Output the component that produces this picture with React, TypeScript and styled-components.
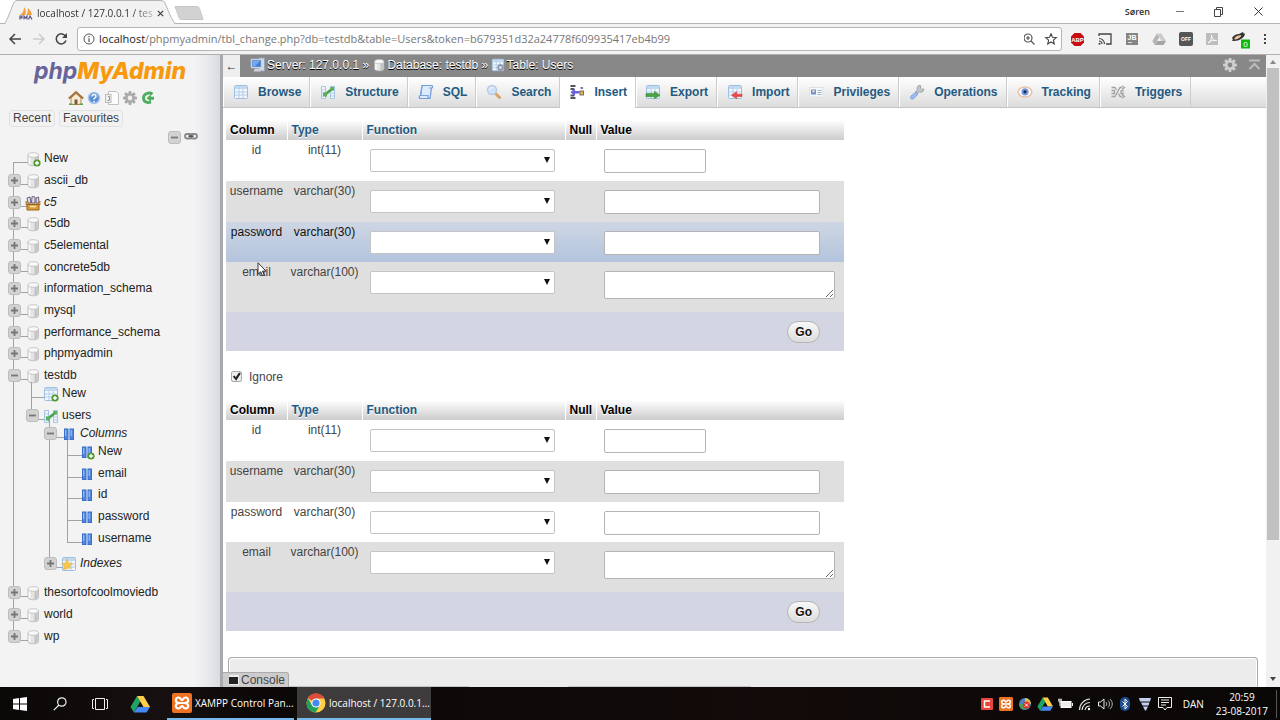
import React from "react";
import styled, { createGlobalStyle, css } from "styled-components";

const ui = `"Liberation Sans", Arial, sans-serif`;
const system = `"Open Sans", "Noto Sans", sans-serif`;

const GlobalStyle = createGlobalStyle`
  *, *::before, *::after { box-sizing: border-box; }
  body { margin: 0; font-family: ${ui}; font-size: 12px; color: #444; background: #fff; }
  button, input, select, textarea { font: inherit; color: inherit; margin: 0; }
  a { color: inherit; text-decoration: none; }
  ul { list-style: none; margin: 0; padding: 0; }
  svg { display: block; flex: none; }
`;

/* ---------- window frame ---------- */

const Shell = styled.div`
  display: flex;
  flex-direction: column;
  height: 100vh;
  overflow: hidden;
`;

const TabStrip = styled.header`
  display: flex;
  align-items: flex-end;
  height: 24px;
  flex: none;
  padding-left: 4px;
  background: #fff;
  border-bottom: 1px solid #b4b4b4;
`;

const BrowserTab = styled.div`
  position: relative;
  display: flex;
  align-items: center;
  gap: 4px;
  width: 172px;
  height: 24px;
  margin-bottom: -1px;
  padding: 2px 15px 0 15px;
  font: 10px/16px ${system};
  color: #333;
`;

const TabShape = styled.svg`
  position: absolute;
  inset: 0;
  width: 100%;
  height: 100%;
`;

const TabLabel = styled.span`
  position: relative;
  flex: 1;
  white-space: nowrap;
  mask-image: linear-gradient(to right, #000 80%, rgba(0, 0, 0, 0.3));
`;

const PlainButton = styled.button`
  position: relative;
  display: flex;
  align-items: center;
  justify-content: center;
  padding: 0;
  border: 0;
  background: none;
`;

const NewTab = styled(PlainButton)`
  align-self: flex-start;
  margin-top: 6px;
  margin-left: -2px;
`;

const WindowControls = styled.div`
  display: flex;
  align-items: center;
  align-self: stretch;
  gap: 30px;
  margin-left: auto;
  padding-right: 17px;
  color: #333;
`;

const Profile = styled.span`
  margin-right: -4px;
  font: 600 9px/14px ${system};
`;

const Toolbar = styled.div`
  display: flex;
  align-items: center;
  height: 31px;
  flex: none;
  padding: 0 13px 0 7px;
  background: #f2f2f2;
  border-bottom: 1px solid #b0b0b0;
`;

const NavButtons = styled.div`
  display: flex;
  gap: 7px;
  width: 70px;
`;

const AddressBar = styled.div`
  display: flex;
  align-items: center;
  flex: 1;
  gap: 4px;
  height: 24px;
  padding: 0 1px 0 5px;
  background: #fff;
  border: 1px solid #b5b5b5;
  border-radius: 3px;
`;

const Address = styled.div`
  flex: 1;
  font: 11px/18px ${system};
  color: #777;
  white-space: nowrap;
  overflow: hidden;
  b { font-weight: 400; color: #222; }
`;

const Extensions = styled.div`
  display: flex;
  align-items: center;
  gap: 12px;
  padding-left: 8px;
`;

/* ---------- page ---------- */

const Page = styled.div`
  display: flex;
  flex: 1;
  min-height: 0;
`;

const Sidebar = styled.nav`
  width: 223px;
  flex: none;
  overflow: hidden;
  border-right: 3px solid #a9a9ab;
  background: linear-gradient(to left, #d9dbe0, #e6e7eb 10px, #f3f3f3 26px);
`;

const Logo = styled.a`
  display: block;
  padding-bottom: 2px;
  text-align: center;
  font: italic 700 23px/32px Inter, sans-serif;
  color: #67639b;
  b { font-weight: 800; color: #f8990d; }
`;

const IconRow = styled.div`
  display: flex;
  justify-content: center;
  gap: 2px;
  padding: 1px 0 4px 4px;
`;

const Shortcuts = styled.div`
  display: flex;
  gap: 4px;
  padding: 0 9px;
`;

const Shortcut = styled.button`
  height: 17px;
  padding: 0 3px;
  border: 1px solid #e2e2e2;
  border-radius: 3px;
  background: #f2f2f2;
  line-height: 15px;
`;

const TreeTools = styled.div`
  display: flex;
  justify-content: flex-end;
  align-items: center;
  gap: 2px;
  height: 20px;
  padding: 0 21px 2px 0;
`;

const Row = styled.li<{ $h: number }>`
  display: flex;
  align-items: flex-start;
  height: ${(p) => p.$h}px;
  padding-left: 6px;
  color: #222;
`;

const Guide = styled.span<{ $v?: "full" | "top" | "bottom"; $branch?: boolean }>`
  --line: linear-gradient(#a2a2a2, #a2a2a2);
  align-self: stretch;
  width: ${(p) => (p.$branch ? 22 : 18)}px;
  margin-right: ${(p) => (p.$branch ? -4 : 0)}px;
  flex: none;
  padding-top: 3px;
  background-image: ${(p) => (p.$v ? "var(--line)" : "none")}, ${(p) => (p.$branch ? "var(--line)" : "none")};
  background-repeat: no-repeat;
  background-size: 1px ${(p) => (p.$v === "top" ? "15px" : "100%")}, 15px 1px;
  background-position: 7px ${(p) => (p.$v === "bottom" ? "15px" : "0")}, 7px 15px;
`;

const Toggle = styled.button`
  display: flex;
  align-items: center;
  justify-content: center;
  width: 13px;
  height: 13px;
  margin: 2px 0 0 2px;
  padding: 0;
  border: 1px solid #bdbdbd;
  border-radius: 3px;
  background: #d2d2d2;
`;

const NodeIcon = styled(Guide)`
  padding: 4px 0 0 1px;
`;

const NodeLink = styled.a<{ $italic?: boolean }>`
  padding: 3px 0 0 2px;
  line-height: 16px;
  font-style: ${(p) => (p.$italic ? "italic" : "normal")};
`;

const Main = styled.main`
  position: relative;
  display: flex;
  flex: 1;
  flex-direction: column;
  min-width: 0;
  overflow: hidden;
  background: #fff;
`;

const Crumbs = styled.div`
  display: flex;
  align-items: center;
  height: 22px;
  flex: none;
  padding-bottom: 2px;
  background: #888;
  color: #fff;
  text-shadow: 0 1px 0 #000;
  white-space: pre;
  svg { margin-right: 1px; }
`;

const Collapse = styled.button`
  width: 17px;
  height: 22px;
  margin: 2px 10px 0 0;
  padding: 0;
  border: 0;
  background: #eee;
  color: #333;
  line-height: 20px;
`;

const CrumbTools = styled.div`
  display: flex;
  gap: 7px;
  margin-left: auto;
  padding-right: 3px;
`;

const Tabs = styled.ul`
  display: flex;
  height: 31px;
  flex: none;
  background: linear-gradient(#fff, #dcdcdc);
  border-bottom: 1px solid #c4c4c4;
`;

const TabLink = styled.a<{ $on?: boolean }>`
  display: flex;
  align-items: center;
  gap: 9px;
  height: ${(p) => (p.$on ? 31 : 30)}px;
  padding: 0 8px ${(p) => (p.$on ? 1 : 0)}px 10px;
  border-right: 1px solid #ccc;
  box-shadow: inset 1px 0 0 #fff;
  background: ${(p) => (p.$on ? "#fff" : "none")};
  color: #235a81;
  font-weight: 700;
  white-space: nowrap;
`;

const TabItem = styled.li`
  &:nth-child(5) a, &:nth-child(6) a { padding-left: 9px; }
`;

const Content = styled.form`
  padding: 12px 8px 0 3px;
`;

const DataTable = styled.table`
  width: 618px;
  table-layout: fixed;
  border-collapse: collapse;
`;

const Th = styled.th<{ $link?: boolean }>`
  height: 20px;
  padding: 0 4px;
  background: linear-gradient(#fff, #ccc);
  border-right: 1px solid #fff;
  color: ${(p) => (p.$link ? "#235a81" : "#000")};
  line-height: 18px;
  text-align: left;
  text-shadow: 0 1px 0 #fff;
  &:last-child { border-right: 0; }
`;

type Tone = "plain" | "shade" | "hover";
const tones: Record<Tone, string> = {
  plain: "#fff",
  shade: "#dfdfdf",
  hover: "linear-gradient(#ced6e4, #b3c4dc)",
};

const FieldRow = styled.tr<{ $tone: Tone; $h: number }>`
  height: ${(p) => p.$h}px;
  background: ${(p) => tones[p.$tone]};
  color: ${(p) => (p.$tone === "hover" ? "#111" : "#444")};
`;

const Td = styled.td<{ $text?: boolean }>`
  position: relative;
  padding: ${(p) => (p.$text ? "3px 0 0" : "9px 0 0 8px")};
  text-align: ${(p) => (p.$text ? "center" : "left")};
  vertical-align: top;
  line-height: 15px;
`;

const SelectBox = styled.span`
  position: relative;
  display: block;
  width: 185px;
  &::after {
    content: "";
    position: absolute;
    top: 8px;
    right: 5px;
    width: 6px;
    height: 6px;
    background: #111;
    clip-path: polygon(0 0, 100% 0, 50% 100%);
  }
`;

const field = css`
  display: block;
  border: 1px solid #b4b4b4;
  border-radius: 2px;
  background: #fff;
  padding: 2px 5px;
`;

const Select = styled.select`
  ${field}
  appearance: none;
  width: 100%;
  height: 23px;
  border-color: #c4c4c4;
`;

const TextInput = styled.input<{ $w: number }>`
  ${field}
  width: ${(p) => p.$w}px;
  height: 24px;
`;

const TextArea = styled.textarea`
  ${field}
  width: 231px;
  height: 28px;
`;

const FooterCell = styled.td`
  height: 39px;
  padding: 0 24px 0 0;
  background: #d3d6e2;
`;

const GoButton = styled.button`
  display: block;
  height: 22px;
  margin-left: auto;
  padding: 0 7px;
  border: 1px solid #b4b4b4;
  border-radius: 12px;
  background: linear-gradient(#f8f8f8, #dcdcdc);
  color: #111;
  font-weight: 700;
  text-shadow: 0 1px 0 #fff;
`;

const IgnoreRow = styled.label`
  display: flex;
  align-items: center;
  gap: 7px;
  height: 49px;
  padding: 2px 0 0 5px;
`;

const Checkbox = styled.input`
  appearance: none;
  width: 11px;
  height: 11px;
  border: 1px solid #aaa;
  border-radius: 2px;
  background: #eee;
  &:checked::before {
    content: "";
    display: block;
    width: 9px;
    height: 9px;
    background: #222;
    clip-path: polygon(10% 50%, 28% 38%, 42% 58%, 78% 5%, 98% 16%, 46% 96%);
  }
`;

const Options = styled.fieldset`
  display: flex;
  gap: 97px;
  margin: 26px 0 0 2px;
  padding: 28px 56px;
  border: 1px solid #aaa;
  border-bottom: 0;
  border-radius: 4px 4px 0 0;
  background: #ececec;
  box-shadow: inset 0 0 0 1px #fff;
`;

const ConsoleButton = styled.button`
  position: absolute;
  left: 0;
  bottom: 0;
  display: flex;
  align-items: center;
  gap: 2px;
  height: 15px;
  padding: 0 3px 0 6px;
  border: 1px solid #aaa;
  border-width: 1px 1px 0 0;
  border-radius: 0 3px 0 0;
  background: #ccc;
`;

const ScrollTrack = styled.div`
  display: flex;
  flex-direction: column;
  align-items: center;
  width: 14px;
  flex: none;
  padding: 5px 0 6px;
  background: #f1f1f1;
`;

const ScrollRail = styled.div`
  flex: 1;
  width: 12px;
  margin: 4px 0;
`;

const ScrollThumb = styled.div`
  height: 78%;
  background: #c1c1c1;
`;

const Cursor = styled.svg`
  position: absolute;
  left: 31px;
  top: 0;
`;

/* ---------- taskbar ---------- */

const Taskbar = styled.footer`
  display: flex;
  align-items: center;
  height: 33px;
  flex: none;
  padding: 0 3px 0 0;
  background: linear-gradient(to right, #0a0707, #171010 13%, #0c0808 20%, #120b0a 60%, #0a0707);
  color: #fff;
  font: 10px/14px ${system};
`;

const Launcher = styled(PlainButton)`
  width: 40px;
  height: 33px;
`;

const TaskButtons = styled.div`
  display: flex;
  gap: 3px;
  padding-left: 7px;
`;

const TaskButton = styled.button<{ $on?: boolean }>`
  display: flex;
  align-items: center;
  gap: 3px;
  flex: none;
  width: ${(p) => (p.$on ? 134 : 127)}px;
  height: 33px;
  padding: 0 0 0 ${(p) => (p.$on ? 9 : 5)}px;
  border: 0;
  border-bottom: 2px solid #76b9ed;
  background: ${(p) => (p.$on ? "#3e3b3c" : "none")};
  color: #fff;
  white-space: nowrap;
`;

const Tray = styled.div`
  display: flex;
  align-items: center;
  gap: 4px;
  margin-left: auto;
`;

const TrayLanguage = styled.span`
  padding-left: 6px;
`;

const Clock = styled.time`
  padding: 0 8px;
  border-right: 1px solid #555;
  text-align: center;
`;

/* ---------- icons ---------- */

const Plus = ({ minus }: { minus?: boolean }) => (
  <svg width="7" height="7" viewBox="0 0 7 7">
    <path d={minus ? "M0 3.500h7" : "M0 3.500h7M3.500 0v7"} stroke="#777" strokeWidth="1.800" />
  </svg>
);

const Added = () => (
  <g>
    <circle cx="12" cy="12" r="3.6" fill="#4f9a2e" />
    <path d="M12 10v4M10 12h4" stroke="#fff" strokeWidth="1.4" />
  </g>
);

type IconName =
  | "db" | "dbNew" | "group" | "tableNew" | "table" | "structure" | "columns" | "columnsNew" | "indexes"
  | "sql" | "search" | "insert" | "export" | "import" | "privileges" | "wrench" | "eye" | "triggers"
  | "server" | "tableGear" | "home" | "help" | "doc" | "gear" | "reload" | "link";

const Grid = () => (
  <g>
    <rect x="1.500" y="1.500" width="13" height="13" rx="1" fill="#f2f8fd" stroke="#9dbfe0" />
    <path d="M2 2h12v3H2z" fill="#c2d9f0" />
    <path d="M2 8h12M2 11h12M6 3v11M10 5v9" stroke="#b4cde6" />
  </g>
);

const Gear = ({ fill, hole = "#eee" }: { fill: string; hole?: string }) => (
  <g>
    {[0, 45, 90, 135].map((a) => (
      <rect key={a} x="6.500" y="1" width="3" height="14" rx="1" fill={fill} transform={`rotate(${a} 8 8)`} />
    ))}
    <circle cx="8" cy="8" r="4.800" fill={fill} />
    <circle cx="8" cy="8" r="2.400" fill={hole} />
  </g>
);

const Cylinder = () => (
  <g>
    <path d="M3 4v8.500c0 3 10.500 3 10.500 0V4z" fill="#e4e4e4" stroke="#b5b5b5" strokeWidth=".8" />
    <path d="M9.500 6.500v8c2-.2 3.200-1 3.200-2V5z" fill="#c4c4c4" />
    <path d="M4.500 6v7" stroke="#fff" strokeWidth="1.500" />
    <ellipse cx="8.250" cy="4" rx="5.250" ry="2.300" fill="#f8f8f8" stroke="#bdbdbd" strokeWidth=".8" />
  </g>
);

const Bars = () => (
  <g>
    <rect x="3.500" y="3" width="3.500" height="10.500" fill="#4f86e0" stroke="#3a6fc9" />
    <rect x="9" y="3" width="3.500" height="10.500" fill="#4f86e0" stroke="#3a6fc9" />
    <path d="M4.700 4v6M10.200 4v6" stroke="#a9c8f8" />
  </g>
);

const glyphs: Record<IconName, React.ReactNode> = {
  db: <Cylinder />,
  dbNew: <><Cylinder /><Added /></>,
  group: (
    <g>
      <path d="M2 3l3-1 1 6H3zM7 1.500l3 .5v6H6.500zM11 3l2.500-1 .5 6h-3z" fill="#e3dcea" stroke="#54405e" strokeWidth=".8" />
      <path d="M1 6l2 3h10l2-3v4H1z" fill="#e2ae50" stroke="#a36b1d" strokeWidth=".7" />
      <path d="M2 9.500h12V15H2z" fill="#dc9b35" stroke="#99651c" />
      <path d="M5 11.500h6" stroke="#fbe7b3" strokeWidth="1.500" />
    </g>
  ),
  tableNew: <><Grid /><Added /></>,
  table: <Grid />,
  structure: (
    <g>
      <path d="M1.500 2.500h4v12h-4zM10.500 2.500h4v12h-4z" fill="#eef5fc" stroke="#a6c5e3" />
      <path d="M2 6h3M2 9h3M2 12h3M11 6h3M11 9h3M11 12h3" stroke="#b7d0e9" />
      <path d="M4.500 11L12 5" fill="none" stroke="#4aa04e" strokeWidth="2.600" />
      <path d="M3 8.500h4v4H3zM10.500 3H14v3.500h-3.500z" fill="#5bb05c" />
    </g>
  ),
  columns: <Bars />,
  columnsNew: <><Bars /><Added /></>,
  indexes: (
    <g>
      <Grid />
      <path d="M6 3L4.500 7 0.500 7.500 3.500 10l-1.500 4.500L6.500 12l3 .5-1-2.500 3-2.500-4-.5z" fill="#f7c64b" stroke="#e8b24a" strokeWidth=".6" />
    </g>
  ),
  sql: (
    <g>
      <path d="M4 1.500h9.500c1.500 0 1.500 2.500 0 2.500L12 14.500H2.500c-2 0-1.500-3 0-3z" fill="#dceafa" stroke="#6f9bd8" strokeWidth="1.200" />
      <path d="M4 1.500L2.800 11.500H10c-.5 1 .5 3 2 3M13.500 4H11" fill="none" stroke="#7ba6de" strokeWidth="1.200" />
    </g>
  ),
  search: (
    <g>
      <path d="M9.500 9.500L13.500 13.500" stroke="#d9a468" strokeWidth="3" strokeLinecap="round" />
      <circle cx="6" cy="6" r="4.500" fill="#cfe4fa" stroke="#b9c9dd" strokeWidth="1.400" />
      <path d="M3.500 5.500C4 4 5 3.500 6.500 3.500" stroke="#fff" fill="none" />
    </g>
  ),
  insert: (
    <g>
      <path d="M1.500 2h5M1.500 14h5M1.500 5h3.500M1.500 11.500h3.500" stroke="#555" strokeWidth="1.800" />
      <path d="M1.500 8.300l4.500-4v2.700H10.500v2.600H6v2.700z" fill="#6d63d8" />
      <path d="M11.500 3h2.500v2h-2.500z" fill="#77a" />
      <rect x="11" y="7" width="3.500" height="4" fill="#e7b73e" stroke="#666" strokeWidth=".9" />
    </g>
  ),
  export: (
    <g>
      <Grid />
      <path d="M1 9.500h8.500V7.500l5.500 3.700-5.500 3.500v-2H1z" fill="#4ba343" stroke="#3a8a3a" strokeWidth=".6" />
    </g>
  ),
  import: (
    <g>
      <Grid />
      <path d="M15 10.200H9.500V7.800L4.500 11.200 9.500 14.600v-2.200H15z" fill="#ea4a4a" stroke="#d23a3a" strokeWidth=".6" />
    </g>
  ),
  privileges: (
    <g>
      <rect x="1.500" y="3.500" width="13.500" height="9.500" fill="#f5f8fb" stroke="#dbe3ea" />
      <rect x="3" y="5.500" width="5" height="5" fill="#6d94c9" />
      <circle cx="5.500" cy="7.200" r="1.200" fill="#f2d2b5" />
      <path d="M9.500 6.500h4M9.500 8.500h4M9.500 10.500h4" stroke="#9db4cc" />
    </g>
  ),
  wrench: (
    <g>
      <path d="M10 1.500c2-.8 2 .8 1.300 2.500l1.200 1.200c1.200-.4 2.700-.5 2.300.8-.8 2.200-2.800 2.500-4.500 1.800L8 9.500 6.500 8l1.800-2.300C7.800 4 8.300 2.200 10 1.500z" fill="#c4c7cc" stroke="#95999f" strokeWidth=".9" />
      <path d="M7 8l2 2-4.300 4.600c-2 1.500-4-.6-2.800-2.500z" fill="#9dbcf2" stroke="#6f93d6" strokeWidth=".8" />
    </g>
  ),
  eye: (
    <g>
      <ellipse cx="8" cy="8" rx="6.800" ry="5" fill="#fff" stroke="#e8c2a5" strokeWidth="1.500" />
      <circle cx="8" cy="7.800" r="3.600" fill="#7397d8" />
      <circle cx="8" cy="7.800" r="1.600" fill="#1c2b52" />
    </g>
  ),
  triggers: (
    <g fill="none" stroke="#a2a2a2" strokeWidth="1.300">
      <path d="M1.500 3.500H5L6.500 6M1.500 12.500H5l5-9h2M8.500 9.500l1.500 3h2" />
      <path d="M12 2l2.500 1.500L12 5.500M12 10.500l2.500 2-2.500 1.500M1.500 6.500h3v3h-3M14 6.800h-3v2.700h3" />
    </g>
  ),
  server: (
    <g>
      <path d="M9 1h5.500v13H9z" fill="#d4dae2" stroke="#98a3b0" />
      <rect x="1.500" y="2.500" width="10" height="8" fill="#3f7bd0" stroke="#c5d3e6" strokeWidth="1.400" />
      <path d="M2.500 3.500h8L5 9.500H2.500z" fill="#77a8ea" />
      <path d="M5 11.500h4l1.500 3h-7z" fill="#cdd3da" />
    </g>
  ),
  tableGear: (
    <g>
      <Grid />
      <g transform="translate(6 6) scale(.6)"><Gear fill="#8c96a8" /></g>
    </g>
  ),
  home: (
    <g>
      <path d="M3 8v6.500h10V8L8 3.500z" fill="#f6ecd6" stroke="#b18a50" />
      <path d="M.8 8.500L8 2l7.200 6.500" fill="none" stroke="#a9713c" strokeWidth="2" />
      <path d="M6.500 9.500h3v5h-3z" fill="#7b5a3a" />
      <path d="M1 13.500h3.500V15H1zM11.500 13.500H15V15h-3.500z" fill="#5aa646" />
    </g>
  ),
  help: (
    <g>
      <circle cx="8" cy="8" r="5.500" fill="#5b8fd6" stroke="#a7c4ec" strokeWidth="1.500" />
      <path d="M6 6.500c0-2.800 4.200-2.500 4 0C9.900 7.800 8 7.800 8 9.500M8 11v1.500" fill="none" stroke="#fff" strokeWidth="1.500" />
    </g>
  ),
  doc: (
    <g>
      <path d="M4.500 1.500h8l2 2v11h-10z" fill="#fcfcfc" stroke="#c2c2c2" />
      <rect x="1.500" y="4.500" width="5.500" height="8" fill="#eee" stroke="#bbb" />
      <path d="M4 6.500h1.500v4H3.500" fill="none" stroke="#999" />
    </g>
  ),
  gear: <Gear fill="#a9a9a9" />,
  reload: (
    <g>
      <path d="M12.500 4.200C9 1.500 3.500 4 3.500 8c0 4 4 5.500 7.500 4" fill="none" stroke="#4dac5e" strokeWidth="2.800" />
      <path d="M6.500 8l4.500-3.500v2.200h3v3h-3V12z" fill="#4dac5e" />
    </g>
  ),
  link: (
    <g fill="none" stroke="#888" strokeWidth="1.800">
      <rect x="2" y="6" width="6.500" height="4.500" rx="2.200" />
      <rect x="7.500" y="6" width="6.500" height="4.500" rx="2.200" />
      <path d="M5.500 8.200h5" stroke="#555" />
    </g>
  ),
};

const Icon = ({ name, size = 16 }: { name: IconName; size?: number }) => (
  <svg width={size} height={size} viewBox="0 0 16 16" aria-hidden="true">{glyphs[name]}</svg>
);

const DriveIcon = ({ size }: { size: number }) => (
  <svg width={size} height={size} viewBox="0 0 20 20">
    <path d="M7 2L0.500 13 4 18.500 10.300 7.500z" fill="#1da462" />
    <path d="M7 2h6.500L20 13h-6.500z" fill="#ffcf48" />
    <path d="M7.500 13H20l-3.500 5.500H4z" fill="#4587f4" />
  </svg>
);

const XamppIcon = ({ size }: { size: number }) => (
  <svg width={size} height={size} viewBox="0 0 20 20">
    <rect width="20" height="20" rx="2" fill="#ee7224" />
    <path d="M7.500 10h5M7.500 10c-5 0-4.500-5.500-1-5.500C9 4.500 8.500 7 10 7s1-2.500 3.500-2.500c3.500 0 4 5.500-1 5.500 5 0 4.500 5.500 1 5.500C11 15.500 11.500 13 10 13s-1 2.500-3.500 2.500C3 15.500 2.500 10 7.500 10z" fill="none" stroke="#fff" strokeWidth="2.200" />
  </svg>
);

const ChromeIcon = ({ size }: { size: number }) => (
  <svg width={size} height={size} viewBox="0 0 20 20">
    <circle cx="10" cy="10" r="9.500" fill="#ffce44" />
    <path d="M10 10L1.800 5.200A9.500 9.500 0 0 1 18.300 5.500H10z" fill="#de4a3b" />
    <path d="M1.800 5.200A9.500 9.500 0 0 0 9.500 19.500L14 12.200 6 12.200z" fill="#1da15d" />
    <circle cx="10" cy="10" r="4.600" fill="#fff" />
    <circle cx="10" cy="10" r="3.600" fill="#4688f4" />
  </svg>
);

/* ---------- data ---------- */

type Vertical = "full" | "top" | "bottom";
interface Node {
  label: string;
  icon: IconName;
  h: number;
  guides?: (Vertical | undefined)[];
  toggle?: "+" | "-";
  v?: Vertical;
  below?: boolean;
  italic?: boolean;
}

const database = (label: string, h = 22): Node => ({ label, icon: "db", h, toggle: "+", v: "full" });

const tree: Node[] = [
  { label: "New", icon: "dbNew", h: 22, v: "bottom" },
  database("ascii_db"),
  { ...database("c5", 21), icon: "group", italic: true },
  database("c5db"),
  database("c5elemental"),
  database("concrete5db", 21),
  database("information_schema"),
  database("mysql"),
  database("performance_schema", 21),
  database("phpmyadmin"),
  { label: "testdb", icon: "db", h: 18, toggle: "-", v: "full", below: true },
  { label: "New", icon: "tableNew", h: 22, guides: ["full"], v: "full" },
  { label: "users", icon: "structure", h: 18, guides: ["full"], toggle: "-", v: "top", below: true },
  { label: "Columns", icon: "columns", h: 18, guides: ["full", undefined], toggle: "-", v: "full", below: true, italic: true },
  { label: "New", icon: "columnsNew", h: 22, guides: ["full", undefined, "full"], v: "full" },
  { label: "email", icon: "columns", h: 21, guides: ["full", undefined, "full"], v: "full" },
  { label: "id", icon: "columns", h: 22, guides: ["full", undefined, "full"], v: "full" },
  { label: "password", icon: "columns", h: 22, guides: ["full", undefined, "full"], v: "full" },
  { label: "username", icon: "columns", h: 25, guides: ["full", undefined, "full"], v: "top" },
  { label: "Indexes", icon: "indexes", h: 29, guides: ["full", undefined], toggle: "+", v: "top", italic: true },
  database("thesortofcoolmoviedb"),
  database("world"),
  { ...database("wp"), v: "top" },
];

const tabs: [string, IconName][] = [
  ["Browse", "table"], ["Structure", "structure"], ["SQL", "sql"], ["Search", "search"], ["Insert", "insert"],
  ["Export", "export"], ["Import", "import"], ["Privileges", "privileges"], ["Operations", "wrench"],
  ["Tracking", "eye"], ["Triggers", "triggers"],
];

const columns: { name: string; type: string; h: number; width: number; tone: Tone }[] = [
  { name: "id", type: "int(11)", h: 41, width: 102, tone: "plain" },
  { name: "username", type: "varchar(30)", h: 41, width: 216, tone: "shade" },
  { name: "password", type: "varchar(30)", h: 40, width: 216, tone: "plain" },
  { name: "email", type: "varchar(100)", h: 50, width: 0, tone: "shade" },
];

/* ---------- parts ---------- */

const TreeRow = ({ node }: { node: Node }) => (
  <Row $h={node.h}>
    {node.guides?.map((g, i) => <Guide key={i} $v={g} />)}
    <Guide $v={node.v} $branch>
      {node.toggle && (
        <Toggle type="button" aria-label={node.toggle === "+" ? "Expand" : "Collapse"}>
          <Plus minus={node.toggle === "-"} />
        </Toggle>
      )}
    </Guide>
    <NodeIcon $v={node.below ? "bottom" : undefined}><Icon name={node.icon} /></NodeIcon>
    <NodeLink href="#" $italic={node.italic}>{node.label}</NodeLink>
  </Row>
);

const InsertTable = ({ hovered }: { hovered?: string }) => (
  <DataTable>
    <colgroup>
      <col width="61" /><col width="75" /><col width="203" /><col width="31" /><col />
    </colgroup>
    <thead>
      <tr>
        <Th>Column</Th>
        <Th $link><a href="#">Type</a></Th>
        <Th $link><a href="#">Function</a></Th>
        <Th>Null</Th>
        <Th>Value</Th>
      </tr>
    </thead>
    <tbody>
      {columns.map((c) => (
        <FieldRow key={c.name} $h={c.h} $tone={hovered === c.name ? "hover" : c.tone}>
          <Td $text>
            {c.name}
            {hovered && c.name === "email" && (
              <Cursor width="11" height="16" viewBox="0 0 11 16">
                <path d="M1 .8v11.400l2.700-2.500 1.700 4 1.700-.8-1.600-3.800H9z" fill="#fff" stroke="#222" strokeWidth=".9" />
              </Cursor>
            )}
          </Td>
          <Td $text>{c.type}</Td>
          <Td>
            <SelectBox><Select aria-label={`Function for ${c.name}`}><option /></Select></SelectBox>
          </Td>
          <Td />
          <Td>
            {c.width ? <TextInput $w={c.width} aria-label={`Value of ${c.name}`} /> : <TextArea aria-label={`Value of ${c.name}`} />}
          </Td>
        </FieldRow>
      ))}
    </tbody>
    <tfoot>
      <tr><FooterCell colSpan={5}><GoButton type="button">Go</GoButton></FooterCell></tr>
    </tfoot>
  </DataTable>
);

const stroke = { fill: "none", stroke: "#444", strokeWidth: 1.5 };

export default function App() {
  return (
    <Shell>
      <GlobalStyle />
      <TabStrip>
        <BrowserTab>
          <TabShape viewBox="0 0 172 24" preserveAspectRatio="none">
            <path d="M0 24C3 22 8 6 10 2.500Q11 .5 13 .5H157Q160 .5 161 3C163 7 168 22 172 24z" fill="#f2f2f2" stroke="#b4b4b4" />
            <path d="M2 24h168" stroke="#f2f2f2" strokeWidth="2" />
          </TabShape>
          <PlainButton as="span">
            <svg width="14" height="14" viewBox="0 0 14 14">
              <path d="M1 9C4 7 5 4 5 1c2 2 2 5 1.500 8zM7.500 9C9 7 9 4 8.500 2c2 1 4 4 4.500 7z" fill="#f6a03c" />
              <path d="M1 13.500V10h2v1.800H1M5 13.500V10l1.500 2L8 10v3.500M9.500 13.500l1.500-3.500 2 3.500" fill="none" stroke="#5b5488" strokeWidth="1.200" />
            </svg>
          </PlainButton>
          <TabLabel>localhost / 127.0.0.1 / tes</TabLabel>
          <PlainButton aria-label="Close tab">
            <svg width="7" height="7" viewBox="0 0 8 8"><path d="M1 1l6 6M7 1L1 7" {...stroke} /></svg>
          </PlainButton>
        </BrowserTab>
        <NewTab aria-label="New tab">
          <svg width="30" height="14" viewBox="0 0 30 14"><path d="M1 .5h22c1 0 2 .5 2.500 2L29 13.500H7c-1 0-1.500-.5-2-2z" fill="#d2d2d2" stroke="#c6c6c6" /></svg>
        </NewTab>
        <WindowControls>
          <Profile>Søren</Profile>
          <PlainButton aria-label="Minimise"><svg width="8" height="8" viewBox="0 0 8 8"><path d="M0 3.500h8" stroke="#777" /></svg></PlainButton>
          <PlainButton aria-label="Restore"><svg width="10" height="10" viewBox="0 0 10 10"><path d="M.5 2.500h6v7h-6zM2.500 2.500v-2h6v7h-2" fill="none" stroke="#444" /></svg></PlainButton>
          <PlainButton aria-label="Close"><svg width="9" height="9" viewBox="0 0 9 9"><path d="M.5 .5l8 8M8.500 .5l-8 8" stroke="#333" /></svg></PlainButton>
        </WindowControls>
      </TabStrip>

      <Toolbar>
        <NavButtons>
          <PlainButton aria-label="Back"><svg width="16" height="14" viewBox="0 0 16 14"><path d="M14 7H3M8 2L3 7l5 5" {...stroke} /></svg></PlainButton>
          <PlainButton aria-label="Forward"><svg width="16" height="14" viewBox="0 0 16 14"><path d="M3 7h11M9 2l5 5-5 5" {...stroke} stroke="#ccc" /></svg></PlainButton>
          <PlainButton aria-label="Reload"><svg width="16" height="14" viewBox="0 0 16 14"><path d="M12.500 4.200A5 5 0 1 0 13 8.500" {...stroke} /><path d="M14 1v5H9z" fill="#444" /></svg></PlainButton>
        </NavButtons>
        <AddressBar>
          <svg width="12" height="12" viewBox="0 0 12 12"><circle cx="6" cy="6" r="5" fill="none" stroke="#555" /><path d="M6 5.200v3.800M6 3v1.200" stroke="#555" strokeWidth="1.200" /></svg>
          <Address><b>localhost</b>/phpmyadmin/tbl_change.php?db=testdb&amp;table=Users&amp;token=b679351d32a24778f609935417eb4b99</Address>
          <PlainButton aria-label="Zoom"><svg width="14" height="12" viewBox="1 0 14 12"><circle cx="5" cy="5" r="4" fill="none" stroke="#555" strokeWidth="1.200" /><path d="M8 8l3.500 3.500M3 5h4M5 3v4" stroke="#555" strokeWidth="1.200" /></svg></PlainButton>
          <PlainButton aria-label="Bookmark"><svg width="18" height="12" viewBox="3 0 18 12"><path d="M12 .8l1.500 3.500 3.800.4-2.900 2.500.9 3.800L12 9l-3.300 2 .9-3.800-2.900-2.500 3.800-.4z" fill="none" stroke="#444" strokeWidth="1.100" /></svg></PlainButton>
        </AddressBar>
        <Extensions>
          <svg width="15" height="15" viewBox="0 0 15 15">
            <path d="M4.500 1h6L14 4.500v6L10.500 14h-6L1 10.500v-6z" fill="#c70d12" />
            <text x="7.500" y="9.800" textAnchor="middle" fontSize="6" fontWeight="700" fill="#fff" fontFamily="Liberation Sans">ABP</text>
          </svg>
          <svg width="16" height="14" viewBox="0 0 16 14"><path d="M2 4V2h12v10H9" fill="none" stroke="#444" strokeWidth="1.300" /><path d="M2 6.500A5.500 5.500 0 0 1 7.500 12M2 9a3 3 0 0 1 3 3" fill="none" stroke="#444" strokeWidth="1.200" /><circle cx="2.500" cy="11.800" r="1" fill="#444" /></svg>
          <svg width="14" height="14" viewBox="0 0 14 14"><rect x="1" y="1" width="12" height="12" fill="#868686" /><text x="7" y="8" textAnchor="middle" fontSize="7" fontWeight="700" fill="#fff" fontFamily="Liberation Sans">JB</text><path d="M3 10.500h4" stroke="#ddd" /></svg>
          <svg width="16" height="14" viewBox="0 0 20 20"><path d="M7 2L.5 13 4 18.500 10.300 7.500z" fill="#b5b5b5" /><path d="M7 2h6.500L20 13h-6.500z" fill="#ccc" /><path d="M7.500 13H20l-3.500 5.500H4z" fill="#a5a5a5" /></svg>
          <svg width="14" height="14" viewBox="0 0 14 14"><rect width="14" height="14" rx="2" fill="#555" /><text x="7" y="9" textAnchor="middle" fontSize="5" fontWeight="700" fill="#fff" fontFamily="Liberation Sans">OFF</text></svg>
          <svg width="14" height="14" viewBox="0 0 14 14"><rect x="1" y="1" width="12" height="12" fill="#bdbdbd" /><path d="M3 11c3-2 4-5 3.500-8 0 3 2 6 5 5.500C9 8 6 8.500 3 11z" fill="none" stroke="#fff" /></svg>
          <svg width="20" height="20" viewBox="0 0 20 20">
            <path d="M1 9c2-3 4-4 7-4l4-2 1 2 1-1c0 3-2 5-4 6-3 2-7 2-9 2 1-1 1-2 0-3z" fill="#333" />
            <path d="M3.500 9c2-2 4-3 7-2.500-1 2-4 4-7 4z" fill="#f1c7a0" />
            <rect x="10" y="10.500" width="9" height="9" fill="#0eb80e" />
            <text x="14.500" y="18" textAnchor="middle" fontSize="8" fill="#fff" fontFamily="Liberation Sans">0</text>
          </svg>
          <PlainButton aria-label="Menu"><svg width="4" height="12" viewBox="0 0 4 12"><path d="M1 1h2v2H1zM1 5h2v2H1zM1 9h2v2H1z" fill="#444" /></svg></PlainButton>
        </Extensions>
      </Toolbar>

      <Page>
        <Sidebar>
          <Logo href="#">php<b>MyAdmin</b></Logo>
          <IconRow>
            {(["home", "help", "doc", "gear", "reload"] as IconName[]).map((n) => (
              <PlainButton key={n} aria-label={n}><Icon name={n} /></PlainButton>
            ))}
          </IconRow>
          <Shortcuts>
            <Shortcut>Recent</Shortcut>
            <Shortcut>Favourites</Shortcut>
          </Shortcuts>
          <TreeTools>
            <Toggle aria-label="Collapse all"><Plus minus /></Toggle>
            <PlainButton aria-label="Unlink from main panel"><Icon name="link" /></PlainButton>
          </TreeTools>
          <ul>
            {tree.map((n, i) => <TreeRow key={i} node={n} />)}
          </ul>
        </Sidebar>

        <Main>
          <Crumbs>
            <Collapse aria-label="Hide panel">←</Collapse>
            <Icon name="server" /><a href="#">Server: 127.0.0.1</a>{" » "}
            <Icon name="db" size={14} /><a href="#">Database: testdb</a>{" » "}
            <Icon name="tableGear" size={14} /><a href="#">Table: Users</a>
            <CrumbTools>
              <svg width="16" height="16" viewBox="0 0 16 16"><Gear fill="#d0d0d0" hole="#888" /></svg>
              <svg width="16" height="16" viewBox="0 0 16 16"><path d="M3 3.500h11M3.500 12l5-5 5 5" fill="none" stroke="#bbb" strokeWidth="2" /></svg>
            </CrumbTools>
          </Crumbs>
          <Tabs>
            {tabs.map(([label, icon]) => (
              <TabItem key={label}><TabLink href="#" $on={label === "Insert"}><Icon name={icon} />{label}</TabLink></TabItem>
            ))}
          </Tabs>
          <Content>
            <InsertTable hovered="password" />
            <IgnoreRow><Checkbox type="checkbox" defaultChecked />Ignore</IgnoreRow>
            <InsertTable />
            <Options>
              <SelectBox><Select aria-label="Insert mode"><option /></Select></SelectBox>
              <SelectBox><Select aria-label="After inserting"><option /></Select></SelectBox>
            </Options>
          </Content>
          <ConsoleButton>
            <svg width="10" height="10" viewBox="0 0 10 10"><rect width="10" height="10" fill="#eee" /><rect y="2" width="9" height="7" fill="#222" /></svg>
            Console
          </ConsoleButton>
        </Main>

        <ScrollTrack>
          <svg width="6" height="4" viewBox="0 0 6 4"><path d="M0 4l3-4 3 4z" fill="#888" /></svg>
          <ScrollRail><ScrollThumb /></ScrollRail>
          <svg width="6" height="4" viewBox="0 0 6 4"><path d="M0 0l3 4 3-4z" fill="#444" /></svg>
        </ScrollTrack>
      </Page>

      <Taskbar>
        <Launcher aria-label="Start"><svg width="14" height="14" viewBox="0 0 14 14"><path d="M0 2l6-.9v5.400H0zM7 1l7-1v6.500H7zM0 7.500h6v5.400L0 12zM7 7.500h7V14l-7-1z" fill="#fff" /></svg></Launcher>
        <Launcher aria-label="Search"><svg width="14" height="14" viewBox="0 0 14 14"><circle cx="8.800" cy="5" r="4.200" fill="none" stroke="#eee" strokeWidth="1.200" /><path d="M6 8L.8 13.200" stroke="#eee" strokeWidth="1.200" /></svg></Launcher>
        <Launcher aria-label="Task view"><svg width="16" height="14" viewBox="0 0 16 14"><path d="M3.500 1.500h9v11h-9zM2 2.500H.5v9H2M14 2.500h1.500v9H14" fill="none" stroke="#eee" /></svg></Launcher>
        <Launcher aria-label="Drive"><DriveIcon size={20} /></Launcher>
        <TaskButtons>
          <TaskButton><XamppIcon size={20} />XAMPP Control Pan...</TaskButton>
          <TaskButton $on><ChromeIcon size={20} />localhost / 127.0.0.1...</TaskButton>
        </TaskButtons>
        <Tray>
          <svg width="16" height="14" viewBox="0 0 16 14"><rect x="2" y="1" width="12" height="12" rx="1" fill="#e8453c" /><path d="M11 4H5.500v6H11" fill="none" stroke="#fff" strokeWidth="1.500" /></svg>
          <XamppIcon size={14} />
          <svg width="16" height="14" viewBox="0 0 16 14"><circle cx="8" cy="7" r="6" fill="#4d7fc4" /><path d="M8 1a6 6 0 0 1 6 6H8z" fill="#e4c04b" /><path d="M2 7h6v6a6 6 0 0 1-6-6z" fill="#4c9a5b" /><circle cx="9.500" cy="8" r="3.500" fill="#d8342c" /><path d="M8 6.500l3 3M11 6.500l-3 3" stroke="#fff" /></svg>
          <DriveIcon size={16} />
          <svg width="16" height="14" viewBox="0 0 16 14"><rect x="4" y="4.500" width="10" height="6" fill="#eee" stroke="#fff" /><path d="M15.500 6v3M1 3h4M2 1.500V5h2V1.500M3 5v4" stroke="#eee" fill="none" /></svg>
          <svg width="16" height="14" viewBox="0 0 16 14"><path d="M2.500 13A11 11 0 0 1 13 2M5 13a8 8 0 0 1 8-7.500M8 13a5 5 0 0 1 5-4" fill="none" stroke="#ddd" strokeWidth="1.200" /><circle cx="12" cy="12" r="1.200" fill="#fff" /></svg>
          <svg width="16" height="14" viewBox="0 0 16 14"><path d="M1.500 5h2L7 2v10L3.500 9h-2z" fill="none" stroke="#eee" /><path d="M9 5c1 1.200 1 2.800 0 4M11 3.500c2 2 2 5 0 7M13 2c3 3 3 7 0 10" fill="none" stroke="#bbb" /></svg>
          <svg width="16" height="14" viewBox="0 0 16 14"><rect x="3" width="10" height="14" rx="5" fill="#1c4f8f" /><path d="M5.500 4.500l5 5L8 12V2l2.500 2.500-5 5" fill="none" stroke="#fff" /></svg>
          <svg width="16" height="14" viewBox="0 0 16 14"><path d="M2 1h12l-1 3.500H3zM4 5.500h8.500l-1 3h-6zM6 9.500h5L9 13.500H8z" fill="#c3cff0" /></svg>
          <svg width="16" height="14" viewBox="0 0 16 14"><path d="M1.500 .5h13v10H10l-2 2.500-2-2.500H1.500z" fill="none" stroke="#eee" /><path d="M4 3h8M4 5.500h8M4 8h5" stroke="#eee" /></svg>
          <TrayLanguage>DAN</TrayLanguage>
          <Clock>20:59<br />23-08-2017</Clock>
        </Tray>
      </Taskbar>
    </Shell>
  );
}
